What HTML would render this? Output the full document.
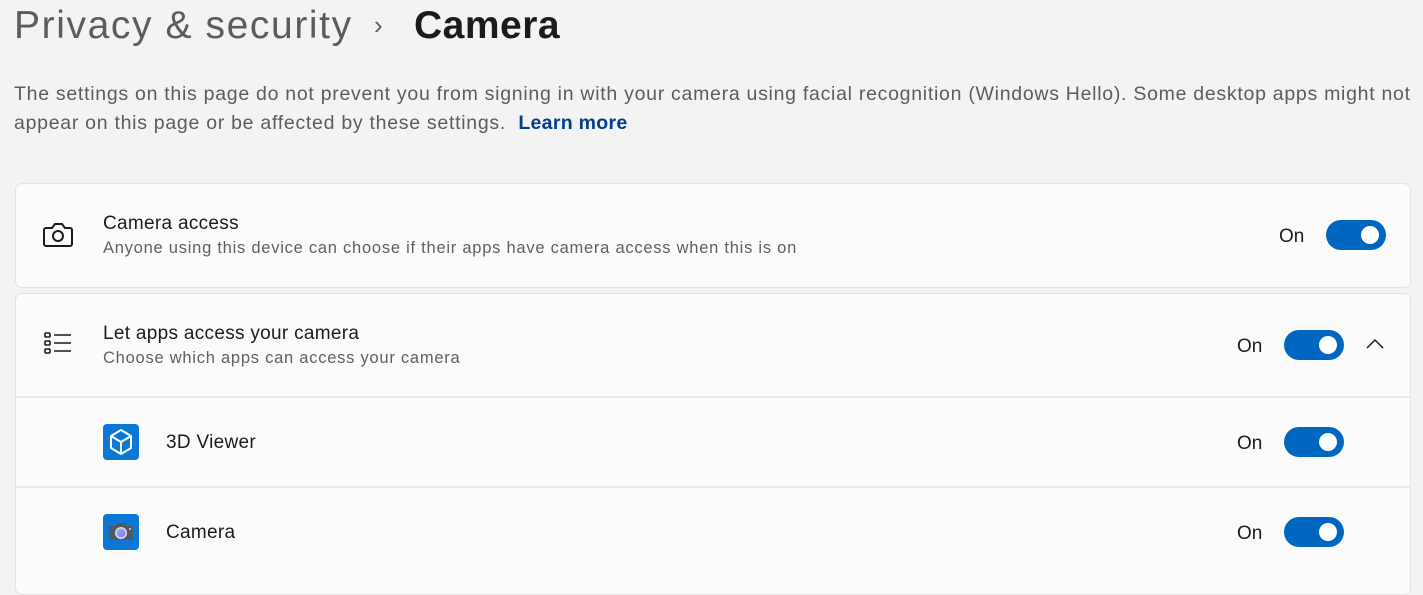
<!DOCTYPE html>
<html><head><meta charset="utf-8"><style>
body{margin:0;width:1423px;height:573px;background:#f3f3f3;font-family:"Segoe UI","Liberation Sans",sans-serif;overflow:hidden;position:relative;color:#1b1b1b}
.abs{position:absolute;white-space:nowrap}
.card{position:absolute;left:15px;width:1394px;background:#fbfbfb;border:1px solid #e3e3e3;border-radius:7px}
.t{font-size:19px;color:#1b1b1b;letter-spacing:0.3px}
.s{font-size:16.5px;color:#606060;letter-spacing:0.75px}
.on{font-size:19px;color:#1b1b1b}
.tg{position:absolute;width:60px;height:30px;border-radius:15px;background:#0067c0}
.tg:after{content:"";position:absolute;right:7px;top:6px;width:18px;height:18px;border-radius:50%;background:#fff}
.div{position:absolute;left:15px;width:1396px;height:2px;background:#e9e9e9}
</style></head><body>
<div class="abs" style="left:14px;top:4px;font-size:39px;color:#5c5c5c;letter-spacing:1.6px">Privacy &amp; security</div>
<div class="abs" style="left:374px;top:10px;font-size:26px;color:#5c5c5c">›</div>
<div class="abs" style="left:414px;top:4px;font-size:39px;font-weight:bold;color:#1b1b1b;letter-spacing:0.5px">Camera</div>
<div class="abs" style="left:14px;top:80px;font-size:19.5px;color:#5c5c5c;line-height:29px;letter-spacing:0.72px">The settings on this page do not prevent you from signing in with your camera using facial recognition (Windows Hello). Some desktop apps might not<br>appear on this page or be affected by these settings. &nbsp;<span style="color:#003e92;font-weight:bold;letter-spacing:0.3px">Learn more</span></div>

<div class="card" style="top:183px;height:103px"></div>
<svg class="abs" style="left:42px;top:220px" width="32" height="30" viewBox="0 0 32 30"><path d="M4 8h6l3-4h7l3 4h5a2 2 0 0 1 2 2v14a2 2 0 0 1-2 2H4a2 2 0 0 1-2-2V10a2 2 0 0 1 2-2z" fill="none" stroke="#1b1b1b" stroke-width="2"/><circle cx="16" cy="16" r="5" fill="none" stroke="#1b1b1b" stroke-width="2"/></svg>
<div class="abs t" style="left:103px;top:213px">Camera access</div>
<div class="abs s" style="left:103px;top:239px">Anyone using this device can choose if their apps have camera access when this is on</div>
<div class="abs on" style="left:1279px;top:226px">On</div>
<div class="tg" style="left:1326px;top:220px"></div>

<div class="card" style="top:293px;height:300px"></div>
<svg class="abs" style="left:44px;top:332px" width="28" height="26" viewBox="0 0 28 26"><g fill="none" stroke="#1b1b1b" stroke-width="1.6"><rect x="1" y="1" width="5" height="4" rx="1"/><rect x="1" y="9" width="5" height="4" rx="1"/><rect x="1" y="17" width="5" height="4" rx="1"/><path d="M10 3h17M10 11h17M10 19h17"/></g></svg>
<div class="abs t" style="left:103px;top:323px">Let apps access your camera</div>
<div class="abs s" style="left:103px;top:349px">Choose which apps can access your camera</div>
<div class="abs on" style="left:1237px;top:336px">On</div>
<div class="tg" style="left:1284px;top:330px"></div>
<svg class="abs" style="left:1365px;top:337px" width="20" height="14" viewBox="0 0 20 14"><path d="M2 11l8-8 8 8" fill="none" stroke="#1b1b1b" stroke-width="1.5"/></svg>

<div class="div" style="top:396px"></div>
<svg class="abs" style="left:103px;top:424px" width="36" height="36" viewBox="0 0 36 36"><rect width="36" height="36" rx="4" fill="#0a78d4"/><g fill="none" stroke="#fff" stroke-width="2" stroke-linejoin="round"><path d="M18 6l10 6v12l-10 6-10-6V12z"/><path d="M8 12l10 6 10-6M18 18v12"/></g></svg>
<div class="abs t" style="left:166px;top:432px">3D Viewer</div>
<div class="abs on" style="left:1237px;top:433px">On</div>
<div class="tg" style="left:1284px;top:427px"></div>

<div class="div" style="top:486px"></div>
<svg class="abs" style="left:103px;top:514px" width="36" height="36" viewBox="0 0 36 36"><rect width="36" height="36" rx="4" fill="#0a78d4"/><path d="M6 12h6l2-3h8l2 3h6v14H6z" fill="#4d5a66"/><defs><linearGradient id="g" x1="0" y1="0" x2="1" y2="1"><stop offset="0" stop-color="#5ec8ff"/><stop offset="1" stop-color="#b45cf0"/></linearGradient></defs><circle cx="18" cy="19" r="6" fill="#ddd"/><circle cx="18" cy="19" r="4.5" fill="url(#g)"/><circle cx="27" cy="15" r="1" fill="#ddd"/></svg>
<div class="abs t" style="left:166px;top:522px">Camera</div>
<div class="abs on" style="left:1237px;top:523px">On</div>
<div class="tg" style="left:1284px;top:517px"></div>
</body></html>
